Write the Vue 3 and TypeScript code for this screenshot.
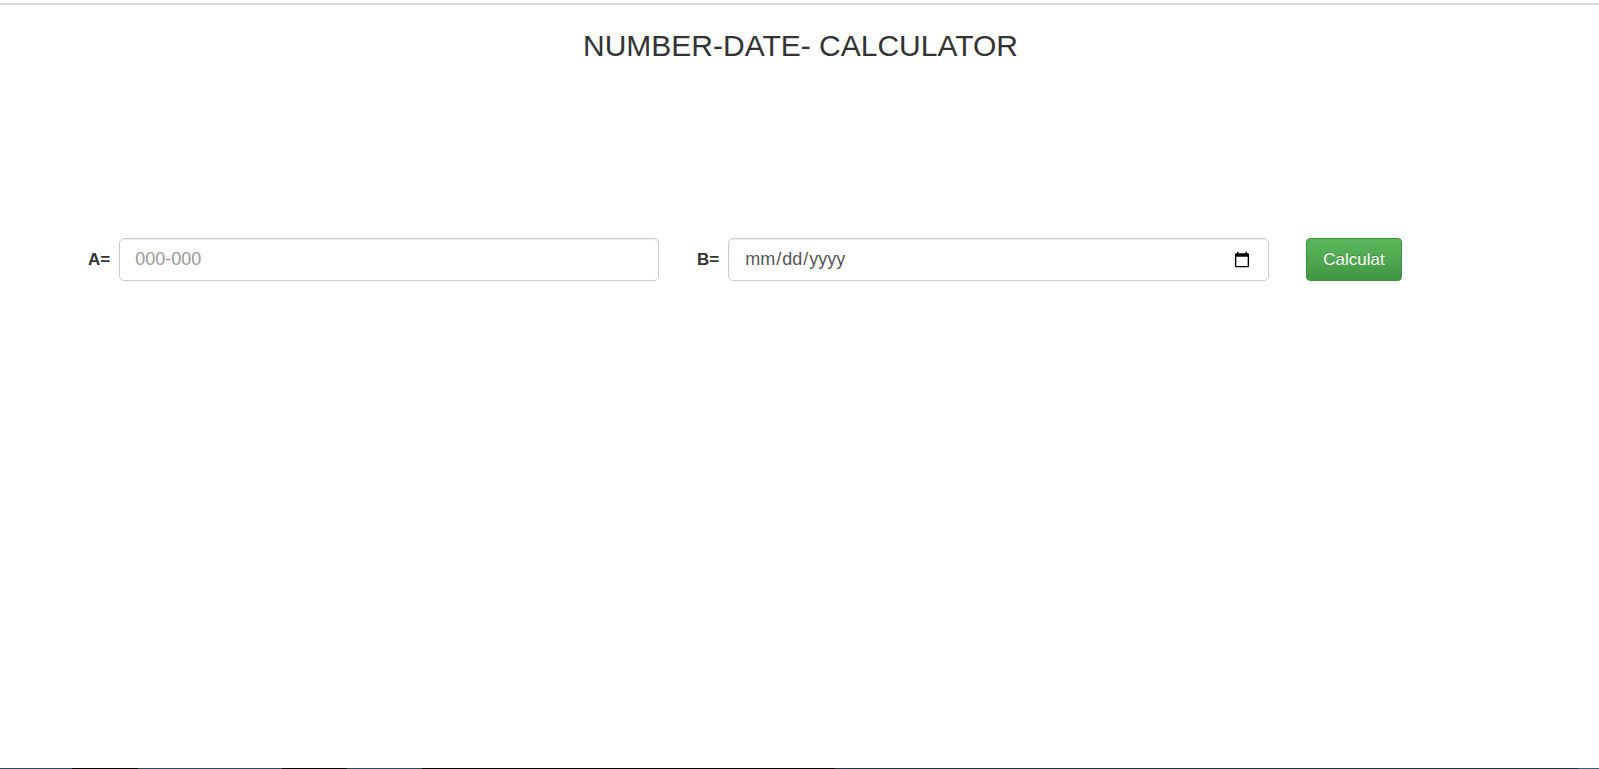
<script setup lang="ts">
const placeholder = "000-000";
</script>

<template>
  <div class="page">
    <div class="rule"></div>
    <h1 class="title">NUMBER-DATE- CALCULATOR</h1>
    <form class="calc" @submit.prevent>
      <label class="field field-a">
        <span class="name">A=</span>
        <input class="control" type="text" :placeholder="placeholder" />
      </label>
      <label class="field field-b">
        <span class="name">B=</span>
        <input class="control" type="date" />
      </label>
      <button class="btn" type="button">Calculat</button>
    </form>
    <div class="edge"></div>
  </div>
</template>

<style>
html, body { margin: 0; background: #fff; }
</style>

<style scoped>
.page {
  box-sizing: border-box;
  display: flex;
  flex-direction: column;
  height: 769px;
  padding-top: 3px;
  font-family: "Liberation Sans", Arial, sans-serif;
  color: #333;
  overflow: hidden;
}
.rule { height: 2px; background: #ddd; }
.title {
  margin: 24px 0 0;
  padding-left: 2px;
  font-size: 30px;
  line-height: 33px;
  font-weight: 400;
  text-align: center;
}
.calc {
  display: flex;
  align-items: center;
  margin-top: 176px;
  padding-left: 88px;
}
.field { display: flex; align-items: center; gap: 9px; }
.field-a { width: 571px; }
.field-b { width: 572px; margin-left: 38px; }
.name { font-size: 17px; font-weight: 700; line-height: 20px; }
.control {
  box-sizing: border-box;
  flex: 1;
  min-width: 0;
  height: 43px;
  padding: 0 15px;
  border: 1px solid #ccc;
  border-radius: 5px;
  background: #fff;
  box-shadow: inset 0 1px 1px rgba(0, 0, 0, .075);
  color: #555;
  font: 18px "Liberation Sans", Arial, sans-serif;
  outline: none;
}
.control::placeholder { color: #999; opacity: 1; }
.btn {
  box-sizing: border-box;
  width: 96px;
  height: 43px;
  margin-left: 37px;
  padding: 0;
  border: 1px solid #3e8f3e;
  border-radius: 4px;
  background: linear-gradient(to bottom, #5cb85c 0%, #419641 100%);
  color: #fff;
  font: 17px "Liberation Sans", Arial, sans-serif;
  text-shadow: 0 -1px 0 rgba(0, 0, 0, .2);
}
.edge {
  flex: none;
  height: 1px;
  margin-top: auto;
  background: linear-gradient(to right,
    #2c4a5a 0 72px, #050607 72px 138px,
    #2c4a5a 138px 282px, #050607 282px 347px,
    #2c4a5a 347px 422px, #050607 422px 835px,
    #1e3342 835px 1578px, #3a5f7a 1578px);
}
</style>
